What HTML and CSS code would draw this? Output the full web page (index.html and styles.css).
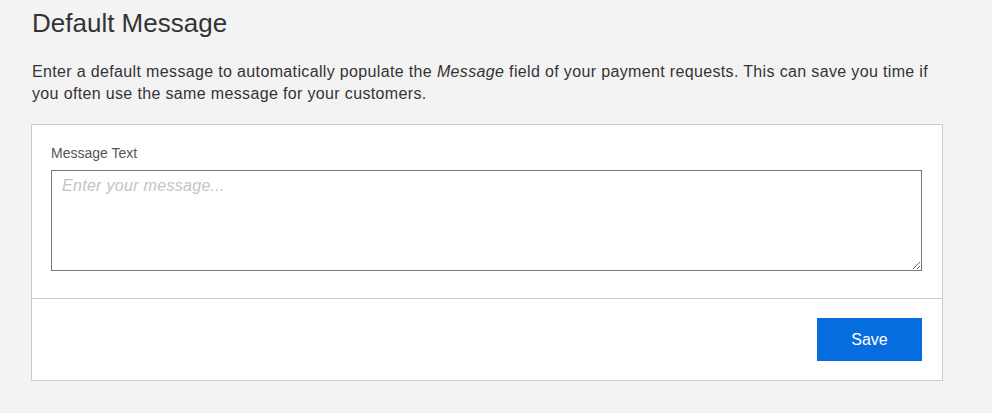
FILE: index.html
```html
<!DOCTYPE html>
<html lang="en">
<head>
    <meta charset="UTF-8">
    <meta name="viewport" content="width=device-width, initial-scale=1.0">
    <title>Default Message</title>
    <link rel="stylesheet" href="styles.css">
</head>
<body>
    <div class="page">
        <h1 class="page-title">Default Message</h1>
        <p class="intro">Enter a default message to automatically populate the <em>Message</em> field of your payment requests. This can save you time if you often use the same message for your customers.</p>
        <form class="card">
            <div class="card-body">
                <label class="field-label" for="messageText">Message Text</label>
                <textarea id="messageText" class="message-input" placeholder="Enter your message..."></textarea>
            </div>
            <div class="card-footer">
                <button type="submit" class="btn-save">Save</button>
            </div>
        </form>
    </div>
</body>
</html>
```

FILE: styles.css
```css
:root {
    --bg-page: #f3f3f3;
    --bg-card: #ffffff;
    --text-primary: #333333;
    --text-label: #555555;
    --border-card: #cccccc;
    --border-input: #767676;
    --accent: #066dde;
}

* {
    margin: 0;
    padding: 0;
    box-sizing: border-box;
}

body {
    background-color: var(--bg-page);
    color: var(--text-primary);
    font-family: 'Liberation Sans', Arial, sans-serif;
}

.page {
    width: 912px;
    margin-left: 31px;
    padding-top: 8px;
}

.page-title {
    font-size: 26px;
    font-weight: normal;
    line-height: 30px;
    margin-left: 1px;
}

.intro {
    font-size: 16px;
    line-height: 22px;
    letter-spacing: 0.35px;
    margin: 23px 0 19px 1px;
}

.card {
    background-color: var(--bg-card);
    border: 1px solid var(--border-card);
}

.card-body {
    padding: 19px 20px 27px 19px;
}

.field-label {
    display: block;
    font-size: 14px;
    line-height: 18px;
    color: var(--text-label);
    margin-bottom: 8px;
}

.message-input {
    display: block;
    width: 100%;
    height: 101px;
    padding: 6px 10px;
    border: 1px solid var(--border-input);
    font-family: inherit;
    font-size: 16px;
    letter-spacing: 0.3px;
    color: var(--text-primary);
    resize: vertical;
}

.message-input::placeholder {
    color: #c4c4c4;
    font-style: italic;
}

.card-footer {
    display: flex;
    justify-content: flex-end;
    padding: 19px 20px 19px 19px;
    border-top: 1px solid var(--border-card);
}

.btn-save {
    width: 105px;
    height: 43px;
    background-color: var(--accent);
    color: #ffffff;
    border: none;
    font-family: inherit;
    font-size: 16px;
    cursor: pointer;
}
```
